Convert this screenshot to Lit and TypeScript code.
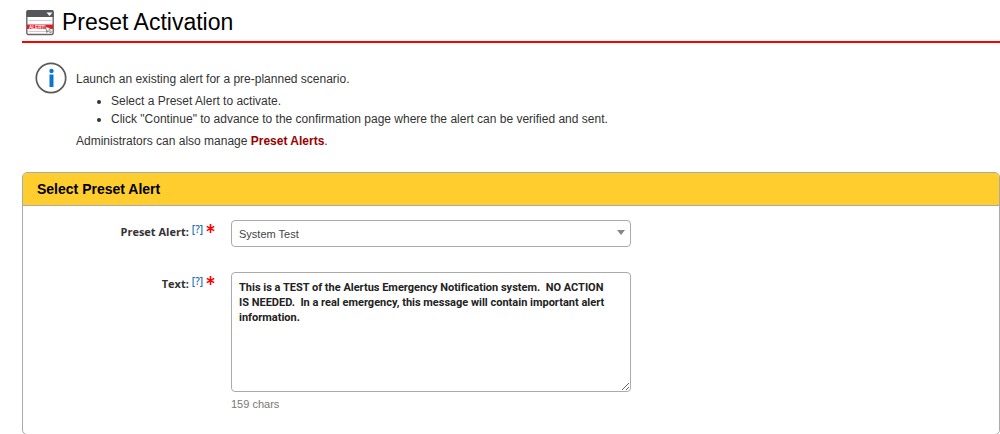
import { LitElement, html, css } from "lit";
import { customElement, state } from "lit/decorators.js";

@customElement("app-root")
export class AppRoot extends LitElement {
  static styles = css`
    :host { display: block; background: #fff; color: #333; padding: 7px 0 0 22px; font: 12px/18px "Liberation Sans", Arial, sans-serif; }
    * { box-sizing: border-box; }
    header { display: flex; align-items: center; gap: 8px; height: 36px; padding: 0 0 4px 4px; border-bottom: 2px solid #f00; }
    .logo { width: 28px; height: 28px; flex: none; }
    h1 { margin: 0; font-size: 23px; line-height: 28px; font-weight: 400; color: #000; }
    .intro { display: flex; gap: 9px; padding: 19px 0 0 13px; }
    .info { width: 32px; height: 32px; flex: none; }
    .intro p { margin: 0; }
    .copy { padding-top: 8px; }
    ul { margin: 4px 0; padding: 0 0 0 35px; }
    a { color: #900; text-decoration: none; font-weight: 700; }
    .panel { margin-top: 22px; border: 1px solid #aaa; border-radius: 5px; overflow: hidden; }
    h2 { margin: 0; padding: 0 14px; font-size: 14px; line-height: 32px; color: #000; background: #ffce2e; border-bottom: 1px solid #aaa; }
    form { padding: 14px 0 22px; display: grid; gap: 25px; }
    .row { display: grid; grid-template-columns: 192px minmax(0, 400px); gap: 16px; }
    .label { display: flex; justify-content: flex-end; gap: 3px; font: 700 11px/18px "Open Sans", sans-serif; padding-top: 3px; }
    .help { font-weight: 600; font-size: 10px; line-height: 13px; color: #1a70b8; }
    .star { width: 9px; height: 9px; margin-top: 1px; }
    .pick { display: grid; align-items: center; }
    .pick > * { grid-area: 1 / 1; }
    .arrow { justify-self: end; width: 8px; height: 5px; margin: 0 6px 2px 0; pointer-events: none; }
    select, textarea { width: 100%; border: 1px solid #aaa; border-radius: 4px; background: #fff; color: #444; }
    select { appearance: none; height: 27px; padding: 0 7px; font: 11px "Liberation Sans", Arial, sans-serif; }
    textarea { display: block; height: 120px; padding: 7px 16px 7px 7px; font: 700 11px/15px Roboto, Arial, sans-serif; font-variant-ligatures: none; color: #222; resize: both; }
    .count { margin-top: 4px; line-height: 16px; font-size: 11px; color: #777; }
  `;

  @state() private length = 159;
  private message = "This is a TEST of the Alertus Emergency Notification system.  NO ACTION IS NEEDED.  In a real emergency, this message will contain important alert information.";

  private label(id: string, text: string) {
    return html`<div class="label"><label for=${id}>${text}</label><a class="help" href="#" aria-label="Help">[?]</a>
      <svg class="star" viewBox="0 0 9 9" aria-hidden="true"><path d="M4.500 0V9M.8 2.400L8.200 6.600M8.200 2.400L.8 6.600" stroke="red" stroke-width="1.600"/></svg></div>`;
  }

  render() {
    return html`
      <header>
        <svg class="logo" viewBox="0 -1 28 28" aria-hidden="true">
          <rect x=".8" y="1.8" width="26.4" height="23.7" rx="1.5" fill="#fff" stroke="#666" stroke-width="1.4"/>
          <path d="M.5 3Q.5 1 2 1H26Q27.500 1 27.500 3V8H.5Z" fill="#555759"/>
          <path d="M20.500 3.500H26.500L23.500 7Z" fill="#fff"/>
          <path d="M2.500 11.500H25.500M2.500 22.500H25.500" stroke="#ccc"/>
          <rect x="1" y="15.500" width="26" height="4.500" fill="#f01822"/>
          <text x="3" y="19.500" font-size="4.600" font-weight="700" fill="#fff">ALERT!</text>
          <path d="M19.500 17.500L25 19.500L23 20.500L25.500 23L24.500 24L22 21.500L20.800 23.500Z" fill="#fff" stroke="#555" stroke-width=".7"/>
        </svg>
        <h1>Preset Activation</h1>
      </header>
      <section class="intro">
        <svg class="info" viewBox="0 0 32 32" aria-hidden="true">
          <circle cx="16" cy="16" r="14.700" fill="#fff" stroke="#58595b" stroke-width="1.700"/>
          <circle cx="16.500" cy="9" r="2.200" fill="#0b77cc"/><path d="M14.500 12.500H18.500V25H14.500Z" fill="#0b77cc"/>
        </svg>
        <div class="copy">
          <p>Launch an existing alert for a pre-planned scenario.</p>
          <ul><li>Select a Preset Alert to activate.</li><li>Click "Continue" to advance to the confirmation page where the alert can be verified and sent.</li></ul>
          <p>Administrators can also manage <a href="#">Preset Alerts</a>.</p>
        </div>
      </section>
      <section class="panel">
        <h2>Select Preset Alert</h2>
        <form>
          <div class="row">${this.label("preset", "Preset Alert:")}
            <div class="pick"><select id="preset"><option>System Test</option></select>
              <svg class="arrow" viewBox="0 0 8 5" aria-hidden="true"><path d="M0 0H8L4 5Z" fill="#888"/></svg></div>
          </div>
          <div class="row">${this.label("text", "Text:")}
            <div><textarea id="text" .value=${this.message} @input=${(e: Event) => (this.length = (e.target as HTMLTextAreaElement).value.length)}></textarea>
              <div class="count">${this.length} chars</div></div>
          </div>
        </form>
      </section>`;
  }
}
